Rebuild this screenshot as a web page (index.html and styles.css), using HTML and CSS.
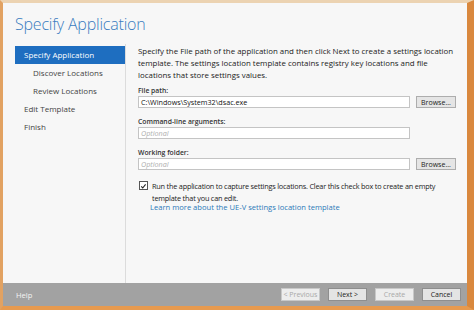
FILE: index.html
```html
<!DOCTYPE html>
<html lang="en">
<head>
    <meta charset="UTF-8">
    <title>Specify Application</title>
    <link rel="stylesheet" href="styles.css">
</head>
<body>
    <div class="window">
        <div class="dialog">
            <h1 class="title">Specify Application</h1>
            <div class="main">
                <ul class="nav">
                    <li class="nav-item active">Specify Application</li>
                    <li class="nav-item sub">Discover Locations</li>
                    <li class="nav-item sub">Review Locations</li>
                    <li class="nav-item">Edit Template</li>
                    <li class="nav-item">Finish</li>
                </ul>
                <div class="content">
                    <p class="intro">Specify the File path of the application and then click Next to create a settings location template. The settings location template contains registry key locations and file locations that store settings values.</p>

                    <label class="field-label">File path:</label>
                    <div class="field-row">
                        <div class="input">C:\Windows\System32\dsac.exe</div>
                        <button class="btn">Browse...</button>
                    </div>

                    <label class="field-label">Command-line arguments:</label>
                    <div class="field-row">
                        <div class="input empty">Optional</div>
                    </div>

                    <label class="field-label">Working folder:</label>
                    <div class="field-row">
                        <div class="input empty">Optional</div>
                        <button class="btn">Browse...</button>
                    </div>

                    <div class="check-row">
                        <span class="checkbox">
                            <svg width="9" height="9" viewBox="0 0 9 9"><path d="M1.6 4.4 L3.5 6.4 L7.2 1.8" fill="none" stroke="#222" stroke-width="1.4"/></svg>
                        </span>
                        <span class="check-text">Run the application to capture settings locations. Clear this check box to create an empty template that you can edit.</span>
                    </div>
                    <a class="link" href="#">Learn more about the UE-V settings location template</a>
                </div>
            </div>
            <div class="footer">
                <span class="help">Help</span>
                <div class="buttons">
                    <button class="btn foot disabled">&lt; Previous</button>
                    <button class="btn foot">Next &gt;</button>
                    <button class="btn foot disabled">Create</button>
                    <button class="btn foot">Cancel</button>
                </div>
            </div>
        </div>
    </div>
</body>
</html>
```

FILE: styles.css
```css
*{
    margin: 0;
    padding: 0;
    box-sizing: border-box;
}
body{
    font-family: "Open Sans", "Noto Sans", sans-serif;
    background: #e39a55;
}
.window{
    width: 474px;
    height: 310px;
    border-top: 3px solid #ecd3b2;
    border-left: 3px solid #e2a262;
    border-right: 7px solid #d9883e;
    border-bottom: 4px solid #e79a4f;
}
.dialog{
    height: 100%;
    background: #f7f7f7;
    display: flex;
    flex-direction: column;
}
.title{
    font-family: "Open Sans", sans-serif;
    font-weight: 300;
    font-size: 16px;
    letter-spacing: -0.2px;
    color: #3a7cc0;
    height: 41px;
    padding: 11px 0 0 12px;
    line-height: 20px;
}
.main{
    flex: 1;
    display: flex;
}
.nav{
    list-style: none;
    width: 123px;
    padding: 2px 0 0 12px;
    border-right: 1px solid #dcdcdc;
}
.nav-item{
    height: 18px;
    line-height: 18px;
    font-size: 8px;
    color: #444;
    padding-left: 9px;
}
.nav-item.sub{
    padding-left: 18px;
}
.nav-item.active{
    background: #1e6ec0;
    color: #fff;
}
.content{
    flex: 1;
    padding: 1px 11px 0 12px;
    font-size: 7.9px;
    color: #222;
}
.intro{
    line-height: 12px;
    margin-bottom: 6px;
}
.field-label{
    display: block;
    font-size: 6.8px;
    font-weight: 600;
    color: #333;
    height: 9px;
    line-height: 8px;
}
.field-row{
    display: flex;
    gap: 6px;
    height: 12px;
    margin-bottom: 10px;
}
.input{
    width: 272px;
    height: 12px;
    border: 1px solid #c4c4c4;
    background: #fff;
    font-size: 7.2px;
    line-height: 10px;
    padding-left: 2px;
    color: #111;
}
.input.empty{
    color: #b0b0b0;
    font-style: italic;
}
.btn{
    font-family: "Open Sans", sans-serif;
    width: 40px;
    height: 12px;
    border: 1px solid #adadad;
    background: #e5e5e5;
    font-size: 7px;
    color: #222;
}
.check-row{
    display: flex;
    gap: 4px;
}
.checkbox{
    flex: none;
    width: 9px;
    height: 9px;
    border: 1px solid #555;
    background: #fff;
    margin: 1px 0 0 1px;
    display: flex;
}
.check-text{
    font-size: 7.3px;
    letter-spacing: -0.2px;
    line-height: 12px;
    padding-right: 16px;
}
.link{
    display: block;
    font-size: 7.6px;
    color: #2b79b8;
    text-decoration: none;
    padding-left: 12px;
    margin-top: -3px;
    line-height: 12px;
}
.footer{
    height: 23px;
    background: #a2a2a2;
    display: flex;
    align-items: center;
    justify-content: space-between;
    padding: 0 6px 0 13px;
}
.help{
    font-size: 7.6px;
    color: #f4f4f4;
}
.buttons{
    display: flex;
    gap: 8px;
}
.btn.foot{
    width: 39px;
    height: 13px;
    background: #e4e4e4;
    border-color: #8e8e8e;
}
.btn.foot.disabled{
    background: #ededed;
    border-color: #c8c8c8;
    color: #a8a8a8;
}
```
